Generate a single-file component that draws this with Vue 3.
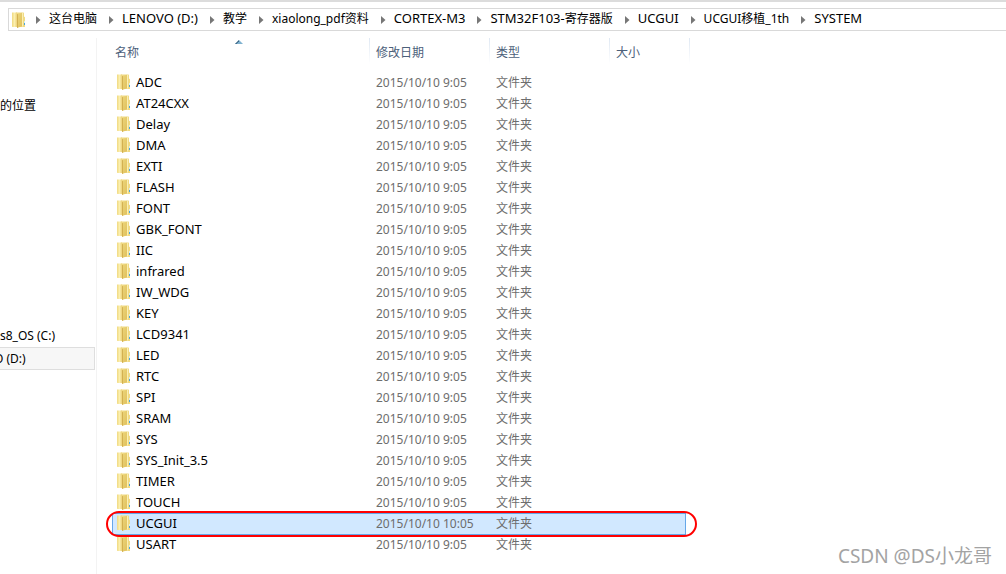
<script setup>
const crumbs = [
  [{ t: '这台电脑' }],
  [{ t: 'LENOVO (D:)', latin: true }],
  [{ t: '教学' }],
  [{ t: 'xiaolong_pdf' }, { t: '资料' }],
  [{ t: 'CORTEX-M3', latin: true }],
  [{ t: 'STM32F103-', latin: true }, { t: '寄存器版' }],
  [{ t: 'UCGUI', latin: true }],
  [{ t: 'UCGUI' }, { t: '移植' }, { t: '_1th' }],
  [{ t: 'SYSTEM', latin: true }],
]
const names = ['ADC', 'AT24CXX', 'Delay', 'DMA', 'EXTI', 'FLASH', 'FONT', 'GBK_FONT', 'IIC', 'infrared', 'IW_WDG', 'KEY', 'LCD9341', 'LED', 'RTC', 'SPI', 'SRAM', 'SYS', 'SYS_Init_3.5', 'TIMER', 'TOUCH', 'UCGUI', 'USART']
const rows = names.map((name) => ({
  name,
  date: name === 'UCGUI' ? '2015/10/10 10:05' : '2015/10/10 9:05',
  selected: name === 'UCGUI',
}))
</script>

<template>
  <div class="explorer">
    <svg class="defs" aria-hidden="true">
      <defs>
        <linearGradient id="back" x1="0" y1="0" x2="1" y2="0">
          <stop offset="0" stop-color="#f0d980" /><stop offset=".5" stop-color="#fbefae" /><stop offset="1" stop-color="#ecd27a" />
        </linearGradient>
        <linearGradient id="front" x1="0" y1="0" x2="1" y2="1">
          <stop offset="0" stop-color="#ecd67c" /><stop offset="1" stop-color="#e0c05c" />
        </linearGradient>
        <symbol id="folder" viewBox="0 0 14 16">
          <path d="M4 .5h7.500l.5.5v3.500l1 .7V15H4z" fill="#f0da84" />
          <path d="M0 .5h5V15H.5L0 14.500z" fill="url(#back)" />
          <path d="M5 2.200 10 .800V14.200L5 16z" fill="url(#front)" />
          <path d="M5 2.200l1-.3v13.700L5 16z" fill="#c9a341" opacity=".7" />
          <path d="M10 1h1v13.500h-1z" fill="#fbf0b4" />
          <path d="M12 9h1v2h-1z" fill="#d5eef2" />
          <path d="M12 11h1v2h-1z" fill="#4aa5dc" />
        </symbol>
      </defs>
    </svg>

    <header class="bar">
      <nav class="address" aria-label="Address">
        <svg class="folder"><use href="#folder" /></svg>
        <template v-for="(crumb, i) in crumbs" :key="i">
          <svg class="arrow" viewBox="0 0 5 8"><path d="M0 0l4.500 4L0 8z" fill="#777" /></svg>
          <a href="#" class="crumb"><span v-for="(p, j) in crumb" :key="j" :class="{ latin: p.latin }">{{ p.t }}</span></a>
        </template>
      </nav>
    </header>

    <div class="body">
      <aside class="side">
        <a href="#" class="place recent">的位置</a>
        <a href="#" class="place">s8_OS (C:)</a>
        <a href="#" class="place current"><span class="clip">O (D:)</span></a>
      </aside>
      <main class="files">
        <table>
          <colgroup><col class="c-name" /><col class="c-date" /><col class="c-date" /><col class="c-size" /></colgroup>
          <thead>
            <tr>
              <th>名称<svg class="sort" viewBox="0 0 8 4"><path d="M0 4l4-4 4 4z" fill="#7fb2d0" /><path d="M0 4l4-4v1.200L1.500 4z" fill="#3a6280" /></svg></th>
              <th>修改日期</th><th>类型</th><th>大小</th>
            </tr>
          </thead>
          <tbody>
            <tr v-for="r in rows" :key="r.name" :class="{ selected: r.selected }">
              <td class="name">
                <span v-if="r.selected" class="fill"></span>
                <span v-if="r.selected" class="ring"></span>
                <span class="cell"><svg class="folder"><use href="#folder" /></svg>{{ r.name }}</span>
              </td>
              <td>{{ r.date }}</td>
              <td>文件夹</td>
              <td></td>
            </tr>
          </tbody>
        </table>
      </main>
    </div>
    <div class="watermark">CSDN @DS小龙哥</div>
  </div>
</template>

<style>
body { background: #fff; }
</style>

<style scoped>
.explorer {
  position: relative;
  display: flex;
  flex-direction: column;
  min-height: 100vh;
  overflow: hidden;
  font: 12px/20px "Noto Sans", "Noto Sans CJK SC", sans-serif;
  color: #000;
}
.defs { position: absolute; width: 0; height: 0; }
a { color: inherit; text-decoration: none; }
.bar { border-top: 2px solid #dcdcdc; padding: 6px 0 0 8px; }
.address {
  display: flex;
  align-items: center;
  height: 21px;
  border: 1px solid #d9d9d9;
  border-right: 0;
  padding-left: 3px;
  white-space: nowrap;
}
.crumb { line-height: 18px; padding-bottom: 2px; }
.folder { width: 14px; height: 16px; flex: none; }
.arrow { width: 5px; height: 8px; flex: none; margin: 0 8px 0 12px; }
.address .folder + .arrow { margin-left: 10px; }
.latin, .name { font-size: 13px; }
.body { display: flex; flex: 1; margin-top: 7px; }
.side {
  width: 96px;
  flex: none;
  border-right: 1px solid #f3f3f3;
  padding-top: 56px;
}
.place { display: block; white-space: nowrap; line-height: 21px; margin-right: 1px; border: 1px solid transparent; border-left: 0; }
.recent { margin-bottom: 207px; }
.current { background: #f7f7f7; border-color: #dedede; }
.clip { display: block; margin-left: -6px; }
.files { padding-left: 15px; flex: 1; }
table { border-collapse: separate; border-spacing: 0; table-layout: fixed; width: 578px; }
.c-name { width: 258px; }
.c-date { width: 120px; }
.c-size { width: 80px; }
th, td { padding: 0 0 0 6px; text-align: left; font-weight: 400; white-space: nowrap; }
th {
  position: relative;
  height: 22px;
  padding-top: 4px;
  color: #4c607a;
  background: linear-gradient(#dfe8f3, #fff) right / 1px 100% no-repeat;
}
th:first-child { padding-left: 3px; }
.sort { position: absolute; left: 123px; top: 2px; width: 8px; height: 4px; }
thead::after { content: ""; display: block; height: 8px; }
td { height: 21px; color: #6d6d6d; }
td.name { color: #000; padding-left: 5px; }
.cell { display: flex; align-items: flex-start; gap: 5px; height: 21px; line-height: 20px; }
.cell .folder { margin-top: 2px; }
.selected { position: relative; z-index: 0; }
.fill {
  position: absolute;
  z-index: -1;
  inset: 0 4px -1px 0;
  border: 1px solid #66a7e8;
  background: #d1e8ff;
}
.ring {
  position: absolute;
  inset: -2px -7px -3px -6px;
  border: 2px solid #f00;
  border-radius: 13px;
}
.watermark {
  position: absolute;
  right: 14px;
  bottom: 4px;
  font-size: 19px;
  line-height: 28px;
  color: #a3a3a3;
}
</style>
